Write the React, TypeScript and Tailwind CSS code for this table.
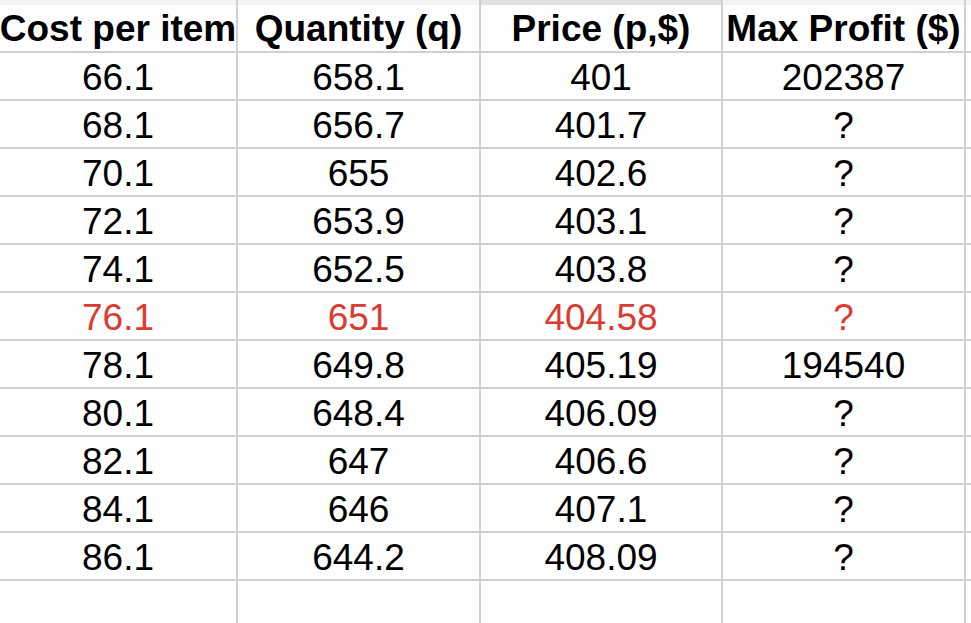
import { Fragment } from "react";

const headers = ["Cost per item", "Quantity (q)", "Price (p,$)", "Max Profit ($)"];

const rows: { cells: string[]; red?: boolean }[] = [
  { cells: ["66.1", "658.1", "401", "202387"] },
  { cells: ["68.1", "656.7", "401.7", "?"] },
  { cells: ["70.1", "655", "402.6", "?"] },
  { cells: ["72.1", "653.9", "403.1", "?"] },
  { cells: ["74.1", "652.5", "403.8", "?"] },
  { cells: ["76.1", "651", "404.58", "?"], red: true },
  { cells: ["78.1", "649.8", "405.19", "194540"] },
  { cells: ["80.1", "648.4", "406.09", "?"] },
  { cells: ["82.1", "647", "406.6", "?"] },
  { cells: ["84.1", "646", "407.1", "?"] },
  { cells: ["86.1", "644.2", "408.09", "?"] },
  { cells: ["", "", "", ""] },
];

const cell = "border-r-2 border-b-2 border-[#d0d0d0] flex items-center justify-center whitespace-nowrap overflow-visible";

export default function App() {
  return (
    <div
      className="w-[971px] h-[623px] overflow-hidden bg-white text-black"
      style={{ fontFamily: '"Liberation Sans", Arial, sans-serif' }}
    >
      <div className="grid grid-cols-[238px_243px_242px_243px_1fr]">
        {/* partial column header strip */}
        <div className="h-[5px] bg-[#f3f3f3] border-r-2 border-[#d0d0d0]" />
        <div className="h-[5px] bg-[#f3f3f3] border-r-2 border-[#d0d0d0]" />
        <div className="h-[5px] bg-[#e1e1e1] border-r-2 border-[#d0d0d0]" />
        <div className="h-[5px] bg-[#f3f3f3] border-r-2 border-[#d0d0d0]" />
        <div className="h-[5px] bg-[#f3f3f3]" />

        {headers.map((h) => (
          <div key={h} className={`${cell} h-[48px] text-[37px] font-bold pt-[1px]`}>
            {h}
          </div>
        ))}
        <div className="h-[48px] border-b-2 border-[#d0d0d0]" />

        {rows.map((r, i) => (
          <Fragment key={i}>
            {r.cells.map((c, j) => (
              <div
                key={j}
                className={`${cell} h-[48px] text-[37px] pt-[4px] ${r.red ? "text-[#dc3b31]" : ""}`}
              >
                {c}
              </div>
            ))}
            <div className="h-[48px] border-b-2 border-[#d0d0d0]" />
          </Fragment>
        ))}
      </div>
    </div>
  );
}
